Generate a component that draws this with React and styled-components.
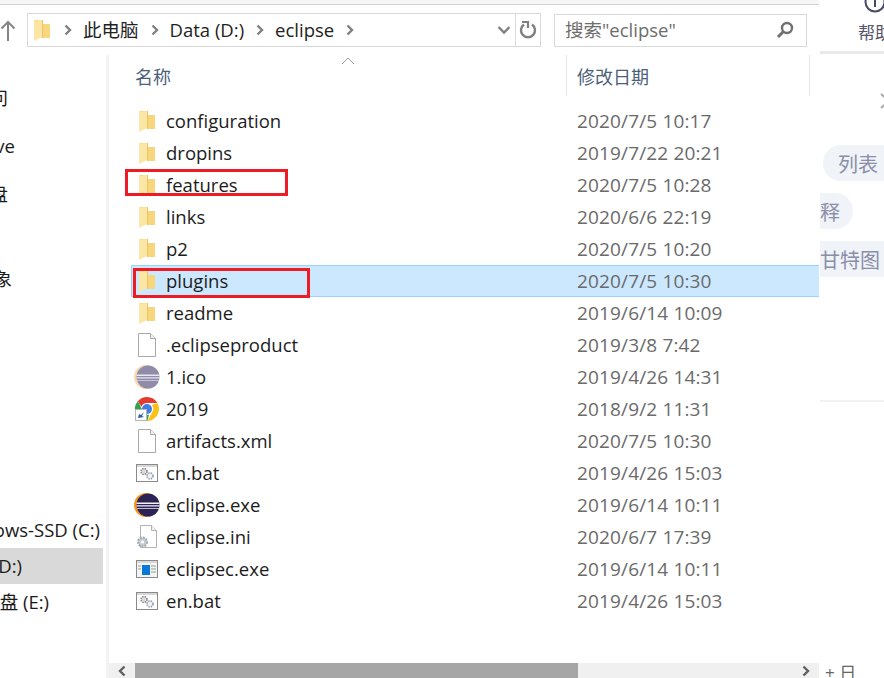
import React from "react";
import styled, { createGlobalStyle } from "styled-components";

const Global = createGlobalStyle`
  html, body {
    margin: 0;
    padding: 0;
    background: #fff;
    overflow: hidden;
  }
  * {
    box-sizing: border-box;
  }
`;

const Page = styled.div`
  display: flex;
  width: 884px;
  height: 678px;
  overflow: hidden;
  background: #fff;
  font-family: "Open Sans", "Noto Sans CJK SC", sans-serif;
  font-size: 18.5px;
  color: #1a1a1a;
`;

const Explorer = styled.div`
  display: flex;
  flex-direction: column;
  width: 819px;
  flex: none;
`;

const TitleStrip = styled.div`
  height: 5px;
  flex: none;
  background: #f6f6f6;
  border-bottom: 1px solid #d4d4d4;
`;

const Toolbar = styled.div`
  display: flex;
  align-items: center;
  height: 50px;
  flex: none;
`;

const UpButton = styled.div`
  display: flex;
  width: 27px;
  height: 22px;
  flex: none;
`;

const AddressBar = styled.div`
  display: flex;
  align-items: center;
  width: 514px;
  height: 34px;
  flex: none;
  padding-left: 6px;
  border: 1px solid #d9d9d9;
`;

const Crumb = styled.span`
  margin: 0 11px 0 10px;
  padding-bottom: 2px;
  white-space: nowrap;
  color: #222;
`;

const CrumbStart = styled.span`
  display: flex;
  margin-left: 13px;
`;

const AddressEnd = styled.div`
  display: flex;
  align-items: center;
  margin-left: auto;
  height: 100%;
`;

const DropSlot = styled.div`
  display: flex;
  align-items: center;
  justify-content: center;
  width: 22px;
  height: 100%;
`;

const RefreshSlot = styled.div`
  display: flex;
  align-items: center;
  justify-content: center;
  width: 25px;
  height: 100%;
  border-left: 1px solid #d9d9d9;
`;

const SearchBox = styled.div`
  display: flex;
  align-items: center;
  justify-content: space-between;
  width: 253px;
  height: 33px;
  flex: none;
  margin-left: 13px;
  padding: 0 12px 0 10px;
  border: 1px solid #d9d9d9;
  color: #6d6d6d;
`;

const SearchText = styled.span`
  padding-bottom: 2px;
`;

const Body = styled.div`
  display: flex;
  flex: 1;
  min-height: 0;
`;

const Nav = styled.nav`
  position: relative;
  width: 109px;
  flex: none;
  overflow: hidden;
  border-right: 3px solid #f3f3f3;
`;

const NavList = styled.div`
  display: flex;
  flex-direction: column;
  height: 100%;
`;

const NavItem = styled.div`
  display: flex;
  align-items: center;
  justify-content: flex-end;
  width: 103px;
  height: 36px;
  flex: none;
  margin-top: ${(p) => p.$gap || 0}px;
  padding-right: ${(p) => p.$right || 0}px;
  padding-bottom: 2px;
  white-space: nowrap;
  background: ${(p) => (p.$active ? "#d9d9d9" : "transparent")};
`;

const Files = styled.div`
  position: relative;
  display: flex;
  flex-direction: column;
  flex: 1;
  min-width: 0;
`;

const Columns = styled.div`
  position: relative;
  display: flex;
  height: 41px;
  flex: none;
  margin-bottom: 9px;
`;

const ColumnHead = styled.div`
  display: flex;
  align-items: center;
  width: ${(p) => p.$width}px;
  flex: none;
  padding-left: ${(p) => p.$pad}px;
  font-size: 18px;
  color: #4c607a;
  border-right: 1px solid #e5e5e5;
`;

const SortCaret = styled.svg`
  position: absolute;
  left: 232px;
  top: 2px;
`;

const Rows = styled.div`
  display: flex;
  flex-direction: column;
  flex: 1;
  padding-left: 22px;
`;

const Row = styled.div`
  position: relative;
  display: flex;
  align-items: center;
  height: 32px;
  flex: none;
  border: 1px solid ${(p) => (p.$selected ? "#99d1ff" : "transparent")};
  border-right: 0;
  background: ${(p) => (p.$selected ? "#cce8ff" : "transparent")};
`;

const IconSlot = styled.div`
  display: flex;
  align-items: center;
  justify-content: center;
  width: 30px;
  flex: none;
`;

const FileName = styled.div`
  width: 415px;
  flex: none;
  padding: 0 0 2px 4px;
  color: #1c1c1c;
`;

const FileDate = styled.div`
  font-size: 19px;
  letter-spacing: 0.15px;
  color: #6a6a6a;
`;

const RedBox = styled.div`
  position: absolute;
  left: ${(p) => p.$left}px;
  top: ${(p) => p.$top}px;
  width: ${(p) => p.$width}px;
  height: ${(p) => p.$height}px;
  border: 3px solid #ed1c24;
`;

const ScrollBar = styled.div`
  display: flex;
  align-items: center;
  height: 15px;
  flex: none;
  background: #f0f0f0;
`;

const ScrollEnd = styled.div`
  display: flex;
  align-items: center;
  justify-content: center;
  width: 26px;
  height: 100%;
  flex: none;
`;

const ScrollThumb = styled.div`
  width: 443px;
  height: 100%;
  flex: none;
  margin-right: auto;
  background: #a6a6a6;
`;

const Panel = styled.aside`
  position: relative;
  display: flex;
  flex-direction: column;
  flex: 1;
  min-width: 0;
  padding-left: 1px;
  overflow: hidden;
`;

const HelpBlock = styled.div`
  height: 54px;
  flex: none;
  padding: 21px 0 0 38px;
  border-bottom: 3px solid #e9e9e9;
  font-size: 17px;
  line-height: 24px;
  color: #55556a;
  white-space: nowrap;
`;

const HelpIcon = styled.svg`
  position: absolute;
  left: 45px;
  top: -10px;
`;

const CloseMark = styled.svg`
  position: absolute;
  left: 61px;
  top: 93px;
`;

const Pills = styled.div`
  display: flex;
  flex-direction: column;
  gap: 12px;
  height: 348px;
  flex: none;
  padding-top: 91px;
  border-bottom: 2px solid #f3f3f3;
`;

const Pill = styled.div`
  display: flex;
  align-items: center;
  width: ${(p) => p.$width}px;
  height: 36px;
  margin-left: ${(p) => p.$offset || 0}px;
  padding: ${(p) => p.$pad || "0"};
  border-radius: ${(p) => p.$radius};
  background: #f0f3f8;
  color: #8a8ea8;
  font-size: 20px;
  white-space: nowrap;
  overflow: hidden;
`;

const FooterText = styled.div`
  margin-top: auto;
  height: 15px;
  padding-left: 5px;
  font-size: 17px;
  line-height: 20px;
  color: #666;
  white-space: nowrap;
  overflow: hidden;
`;

const Folder = () => (
  <svg width="16" height="21" viewBox="0 0 16 21">
    <path d="M0 0h9v4h7v14H8z" fill="#f7d67e" />
    <path d="M8 0h1v18H8z" fill="#eec462" />
    <path d="M0 1l8-1v17l-8 4z" fill="#fce6a6" />
  </svg>
);

const Doc = () => (
  <svg width="20" height="24" viewBox="0 0 20 24">
    <path d="M1.5.5h12l5 5v18h-17z" fill="#fff" stroke="#a8a8a8" />
    <path d="M13.5.5v5h5" fill="#f2f2f2" stroke="#a8a8a8" />
  </svg>
);

const EclipseIcon = ({ pale }) => (
  <svg width="26" height="26" viewBox="0 0 26 26">
    <circle cx="12" cy="13" r="12" fill={pale ? "#f8d9b0" : "#f7941e"} />
    <circle cx="14" cy="13" r="11.5" fill={pale ? "#8f8ba8" : "#2c2255"} />
    <path d="M2.5 10.5h23v1.4h-23zM2.5 13.2h23v1.4h-23z" fill="#fff" opacity={pale ? 0.8 : 0.95} />
    <path d="M3 16h22v1H3z" fill="#fff" opacity={pale ? 0.5 : 0.7} />
  </svg>
);

const ChromeIcon = () => (
  <svg width="24" height="24" viewBox="0 0 24 24">
    <path d="M12 0a12 12 0 0 1 10.4 6H12a6 6 0 0 0-5.6 3.7L2.8 4.3A12 12 0 0 1 12 0z" fill="#e33b2e" />
    <path d="M22.4 6A12 12 0 0 1 12.4 24l4.7-8.6A6 6 0 0 0 16.8 8z" fill="#fbc116" />
    <path d="M2.8 4.3l4.6 8.8a6 6 0 0 0 6.6 4.6L12.4 24A12 12 0 0 1 2.8 4.3z" fill="#2fa54a" />
    <circle cx="12" cy="12" r="5" fill="#3f7fe8" />
    <rect x="0.5" y="12.5" width="11" height="11" fill="#fff" stroke="#b5b5b5" />
    <path d="M3 21l1-4 2 1 3-3-2 4 2 1z" fill="#2a5ea8" />
  </svg>
);

const BatIcon = () => (
  <svg width="22" height="18" viewBox="0 0 22 18">
    <rect x="0.5" y="0.5" width="21" height="17" fill="#fff" stroke="#8a8a8a" />
    <rect x="1" y="1" width="20" height="2" fill="#d8d8d8" />
    <circle cx="8" cy="7.5" r="3" fill="#dcdcdc" stroke="#8a8a8a" strokeWidth="1.6" strokeDasharray="1.4 1" />
    <circle cx="14" cy="12" r="3" fill="#f2f2f2" stroke="#8b9aa8" strokeWidth="1.6" strokeDasharray="1.4 1" />
  </svg>
);

const IniIcon = () => (
  <svg width="22" height="24" viewBox="0 0 22 24">
    <path d="M4.5.5h11l5 5v17h-16z" fill="#fff" stroke="#b2b2b2" />
    <path d="M15.5.5v5h5" fill="#f2f2f2" stroke="#b2b2b2" />
    <circle cx="6.5" cy="17" r="4.5" fill="#c5ccd2" stroke="#a5adb3" strokeWidth="2" strokeDasharray="2 1" />
    <circle cx="6.5" cy="17" r="1.6" fill="#fff" />
  </svg>
);

const ExeIcon = () => (
  <svg width="22" height="18" viewBox="0 0 22 18">
    <rect x="0.5" y="0.5" width="21" height="17" fill="#f4f4f4" stroke="#8a8a8a" />
    <rect x="1" y="1" width="20" height="2" fill="#d8d8d8" />
    <rect x="6" y="5" width="8" height="10" fill="#0a78d7" />
    <path d="M2 6h3M2 9h3M15 6h5M15 9h5M15 12h5" stroke="#9a9a9a" />
  </svg>
);

const Chevron = ({ left, color = "#808080" }) => (
  <svg width="10" height="12" viewBox="0 0 10 12">
    <path
      d={left ? "M7.5 1.5L3 6l4.5 4.5" : "M2.5 1.5L7 6l-4.5 4.5"}
      fill="none"
      stroke={color}
      strokeWidth="2.4"
    />
  </svg>
);

const files = [
  { name: "configuration", date: "2020/7/5 10:17", icon: <Folder /> },
  { name: "dropins", date: "2019/7/22 20:21", icon: <Folder /> },
  { name: "features", date: "2020/7/5 10:28", icon: <Folder />, mark: { left: -7, top: -1, width: 163, height: 27 } },
  { name: "links", date: "2020/6/6 22:19", icon: <Folder /> },
  { name: "p2", date: "2020/7/5 10:20", icon: <Folder /> },
  { name: "plugins", date: "2020/7/5 10:30", icon: <Folder />, selected: true, mark: { left: 1, top: 2, width: 177, height: 30 } },
  { name: "readme", date: "2019/6/14 10:09", icon: <Folder /> },
  { name: ".eclipseproduct", date: "2019/3/8 7:42", icon: <Doc /> },
  { name: "1.ico", date: "2019/4/26 14:31", icon: <EclipseIcon pale /> },
  { name: "2019", date: "2018/9/2 11:31", icon: <ChromeIcon /> },
  { name: "artifacts.xml", date: "2020/7/5 10:30", icon: <Doc /> },
  { name: "cn.bat", date: "2019/4/26 15:03", icon: <BatIcon /> },
  { name: "eclipse.exe", date: "2019/6/14 10:11", icon: <EclipseIcon /> },
  { name: "eclipse.ini", date: "2020/6/7 17:39", icon: <IniIcon /> },
  { name: "eclipsec.exe", date: "2019/6/14 10:11", icon: <ExeIcon /> },
  { name: "en.bat", date: "2019/4/26 15:03", icon: <BatIcon /> },
];

const navItems = [
  { text: "问", gap: 25, right: 95 },
  { text: "ve", gap: 12, right: 88 },
  { text: "盘", gap: 12, right: 95 },
  { text: "象", gap: 49, right: 91 },
  { text: "ows-SSD (C:)", gap: 215, right: 3 },
  { text: "D:)", active: true, right: 81 },
  { text: "盘 (E:)", right: 54 },
];

export default function App() {
  return (
    <Page>
      <Global />
      <Explorer>
        <TitleStrip />
        <Toolbar>
          <UpButton>
            <svg width="16" height="22" viewBox="0 0 16 22">
              <path d="M1.5 9.5L8 3l6.5 6.5M8 3v19" fill="none" stroke="#858585" strokeWidth="2" />
            </svg>
          </UpButton>
          <AddressBar>
            <Folder />
            <CrumbStart>
              <Chevron />
            </CrumbStart>
            <Crumb>此电脑</Crumb>
            <Chevron />
            <Crumb>Data (D:)</Crumb>
            <Chevron />
            <Crumb>eclipse</Crumb>
            <Chevron />
            <AddressEnd>
              <DropSlot>
                <svg width="14" height="10" viewBox="0 0 14 10">
                  <path d="M1.5 2L7 7.5 12.5 2" fill="none" stroke="#808080" strokeWidth="2.4" />
                </svg>
              </DropSlot>
              <RefreshSlot>
                <svg width="18" height="18" viewBox="0 0 18 18">
                  <path d="M5 3.5a7 7 0 1 0 8 0" fill="none" stroke="#808080" strokeWidth="2.4" />
                  <path d="M3 1h6v6" fill="none" stroke="#808080" strokeWidth="2.2" />
                </svg>
              </RefreshSlot>
            </AddressEnd>
          </AddressBar>
          <SearchBox>
            <SearchText>搜索"eclipse"</SearchText>
            <svg width="18" height="18" viewBox="0 0 18 18">
              <circle cx="11" cy="7" r="5" fill="none" stroke="#707070" strokeWidth="2.4" />
              <path d="M7.5 10.5L2 16" stroke="#707070" strokeWidth="3" />
            </svg>
          </SearchBox>
        </Toolbar>
        <Body>
          <Nav>
            <NavList>
              {navItems.map((item) => (
                <NavItem key={item.text} $gap={item.gap} $right={item.right} $active={item.active}>
                  {item.text}
                </NavItem>
              ))}
            </NavList>
          </Nav>
          <Files>
            <Columns>
              <ColumnHead $width={458} $pad={26}>名称</ColumnHead>
              <ColumnHead $width={243} $pad={10}>修改日期</ColumnHead>
              <SortCaret width="14" height="8" viewBox="0 0 14 8">
                <path d="M1 7l6-6 6 6" fill="none" stroke="#9a9a9a" />
              </SortCaret>
            </Columns>
            <Rows>
              {files.map((file) => (
                <Row key={file.name} $selected={file.selected}>
                  <IconSlot>{file.icon}</IconSlot>
                  <FileName>{file.name}</FileName>
                  <FileDate>{file.date}</FileDate>
                  {file.mark && (
                    <RedBox
                      $left={file.mark.left}
                      $top={file.mark.top}
                      $width={file.mark.width}
                      $height={file.mark.height}
                    />
                  )}
                </Row>
              ))}
            </Rows>
            <ScrollBar>
              <ScrollEnd>
                <Chevron left color="#606060" />
              </ScrollEnd>
              <ScrollThumb />
              <ScrollEnd>
                <Chevron color="#606060" />
              </ScrollEnd>
            </ScrollBar>
          </Files>
        </Body>
      </Explorer>
      <Panel>
        <HelpIcon width="22" height="24" viewBox="0 0 22 24">
          <circle cx="11" cy="12" r="9.5" fill="none" stroke="#4a4a68" strokeWidth="2" />
          <path d="M11 10v7" stroke="#4a4a68" strokeWidth="2" />
        </HelpIcon>
        <HelpBlock>帮助</HelpBlock>
        <CloseMark width="10" height="16" viewBox="0 0 10 16">
          <path d="M1 1l8 7-8 7" fill="none" stroke="#aaa" strokeWidth="2" />
        </CloseMark>
        <Pills>
          <Pill $width={61} $offset={3} $pad="0 0 0 15px" $radius="18px 0 0 18px">列表</Pill>
          <Pill $width={33} $pad="0" $radius="0 18px 18px 0">释</Pill>
          <Pill $width={64} $radius="0">甘特图</Pill>
        </Pills>
        <FooterText>+ 日</FooterText>
      </Panel>
    </Page>
  );
}
